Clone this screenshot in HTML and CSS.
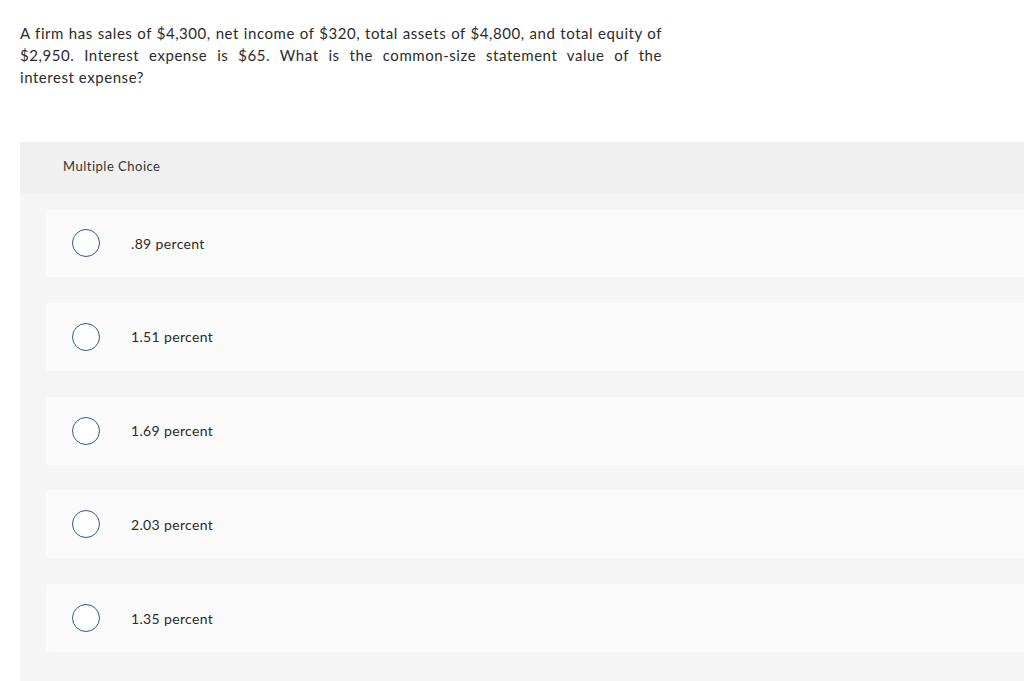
FILE: index.html
```html
<!DOCTYPE html>
<html>
<head>
<meta charset="utf-8">
<link rel="stylesheet" href="styles.css">
</head>
<body>
<div class="page">
  <p class="question">A firm has sales of $4,300, net income of $320, total assets of $4,800, and total equity of $2,950. Interest expense is $65. What is the common-size statement value of the interest&nbsp;expense?</p>
  <section class="panel">
    <div class="panel-head">Multiple Choice</div>
    <div class="panel-body">
      <div class="option"><span class="radio"></span><span class="label">.89 percent</span></div>
      <div class="option"><span class="radio"></span><span class="label">1.51 percent</span></div>
      <div class="option"><span class="radio"></span><span class="label">1.69 percent</span></div>
      <div class="option"><span class="radio"></span><span class="label">2.03 percent</span></div>
      <div class="option"><span class="radio"></span><span class="label">1.35 percent</span></div>
    </div>
  </section>
</div>
</body>
</html>
```
FILE: styles.css
```css
html, body {
  margin: 0;
  padding: 0;
  background: #ffffff;
  overflow: hidden;
}
body {
  font-family: "Lato", "Liberation Sans", sans-serif;
  color: #2b2b2b;
  width: 1024px;
  height: 681px;
}
.page {
  padding: 22px 0 0 20px;
}
.question {
  margin: 0;
  width: 642px;
  font-size: 15px;
  line-height: 22px;
  letter-spacing: 0.55px;
  text-align: justify;
}
.panel {
  margin-top: 54px;
  width: 1040px;
  background: #f5f5f5;
}
.panel-head {
  height: 51px;
  box-sizing: border-box;
  padding: 0 0 3px 43px;
  background: #f0f0f0;
  display: flex;
  align-items: center;
  font-size: 13px;
  letter-spacing: 0.5px;
  color: #333;
}
.panel-body {
  padding: 16px 0 60px 26px;
  display: flex;
  flex-direction: column;
  gap: 25.75px;
}
.option {
  height: 68px;
  background: #fafafa;
  border-radius: 3px;
  display: flex;
  align-items: center;
  padding-left: 26px;
}
.radio {
  width: 26px;
  height: 26px;
  border: 1.3px solid #2d5b91;
  border-radius: 50%;
  background: #fff;
  flex: none;
}
.label {
  margin-left: 31px;
  font-size: 14px;
  letter-spacing: 0.35px;
  color: #2b2b2b;
}
```
